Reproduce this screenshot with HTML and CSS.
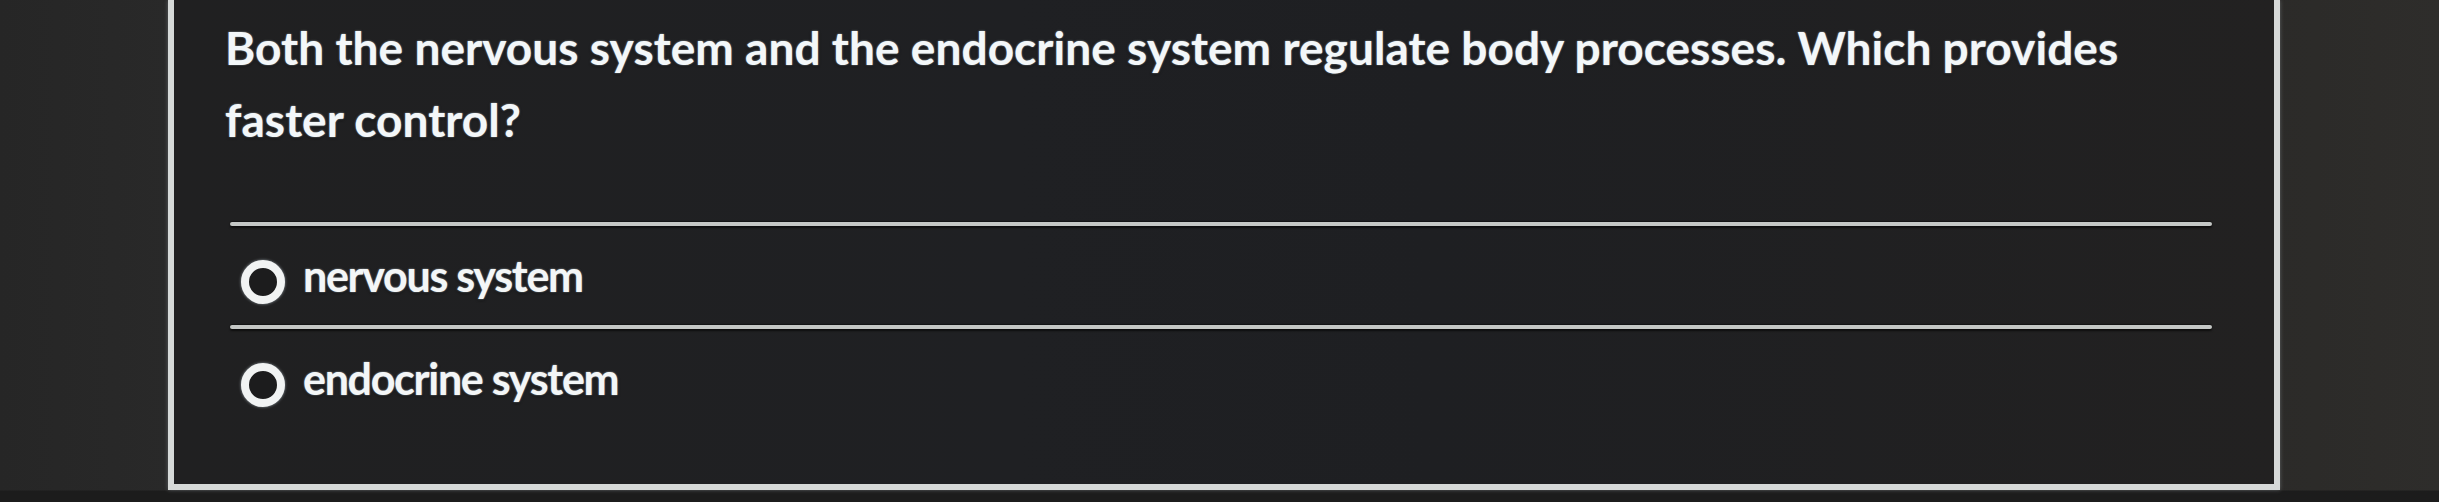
FILE: index.html
```html
<!DOCTYPE html>
<html lang="en">
<head>
<meta charset="utf-8">
<title>Question</title>
<link rel="stylesheet" href="styles.css">
</head>
<body>
<div class="screen">
  <div class="panel">
    <p class="question">Both the nervous system and the endocrine system regulate body processes. Which provides faster control?</p>
    <div class="answers">
      <div class="divider"></div>
      <label class="option"><span class="radio"></span><span class="option-text">nervous system</span></label>
      <div class="divider"></div>
      <label class="option"><span class="radio"></span><span class="option-text">endocrine system</span></label>
    </div>
  </div>
</div>
</body>
</html>
```
FILE: styles.css
```css
html, body {
  margin: 0;
  padding: 0;
}
body {
  width: 2439px;
  height: 502px;
  overflow: hidden;
  background: linear-gradient(90deg, #262626 0%, #292929 7%, #232323 50%, #2c2b29 95%, #2e2d2b 100%);
  font-family: "Lato", "Liberation Sans", sans-serif;
}
.screen {
  height: 502px;
  padding-top: 0.1px;
  background: linear-gradient(180deg, transparent 0, transparent 490px, #1c1c1c 491px, #1c1c1c 502px);
}
.panel {
  margin-left: 168px;
  width: 2112px;
  height: 490px;
  box-sizing: border-box;
  border: 6px solid #d6d9d8;
  border-top: none;
  background: linear-gradient(90deg, #202021 0%, #1f2023 40%, #1e1f22 60%, #222121 100%);
  padding: 12px 62px 0 51px;
  box-shadow: 0 0 4px rgba(200, 210, 215, 0.35);
}
.question {
  margin: 0;
  font-size: 46px;
  line-height: 72px;
  font-weight: 700;
  letter-spacing: 0.05px;
  color: #f3f7f9;
  text-shadow: 0 0 2px rgba(220, 235, 245, 0.7), 0 1px 3px rgba(0, 0, 0, 0.9);
  max-width: 1930px;
}
.answers {
  margin-top: 66px;
  margin-left: 5px;
}
.divider {
  height: 4px;
  background: #c4c7c5;
  border-radius: 2px;
  box-shadow: 0 2px 2px rgba(0, 0, 0, 0.6), 0 -1px 1px rgba(0, 0, 0, 0.4);
}
.option {
  display: flex;
  align-items: center;
  height: 99px;
  box-sizing: border-box;
  padding-top: 12px;
  padding-left: 11px;
  gap: 18px;
}
.radio {
  width: 44px;
  height: 44px;
  box-sizing: border-box;
  border: 8px solid #f1f3f3;
  border-radius: 50%;
  background: #1c1c1d;
  box-shadow: 0 0 3px rgba(220, 235, 245, 0.6);
}
.option-text {
  margin-bottom: 12px;
  font-size: 43px;
  line-height: 1;
  font-weight: 700;
  letter-spacing: -1.3px;
  color: #f3f6f7;
  text-shadow: 0 0 2px rgba(220, 235, 245, 0.7), 0 1px 3px rgba(0, 0, 0, 0.9);
}
```
